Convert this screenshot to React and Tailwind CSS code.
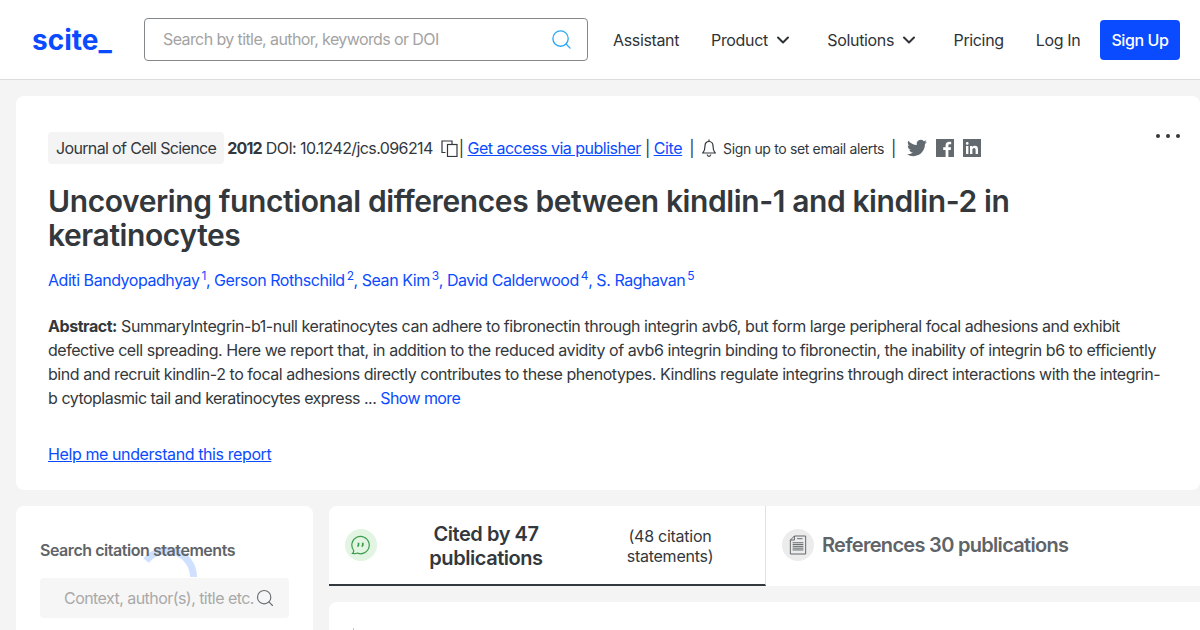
import { ChevronDown, Search } from 'lucide-react'

function TwitterIcon() {
  return (
    <svg viewBox="0 0 24 24" className="w-[20px] h-[20px]" fill="#636a6f">
      <path d="M23.95 4.57a10 10 0 0 1-2.82.77 4.96 4.96 0 0 0 2.16-2.72c-.95.55-2 .95-3.12 1.18a4.92 4.92 0 0 0-8.38 4.48C7.69 8.1 4.07 6.13 1.64 3.16a4.82 4.82 0 0 0-.66 2.47c0 1.71.87 3.21 2.19 4.1a4.9 4.9 0 0 1-2.23-.62v.06a4.92 4.92 0 0 0 3.95 4.83 5 5 0 0 1-2.21.08 4.94 4.94 0 0 0 4.6 3.42A9.87 9.87 0 0 1 0 19.54a14 14 0 0 0 7.56 2.21c9.05 0 14-7.5 14-13.98 0-.21 0-.42-.02-.63a9.94 9.94 0 0 0 2.46-2.55z" />
    </svg>
  )
}

function FacebookIcon() {
  return (
    <svg viewBox="0 0 18 18" className="w-[18px] h-[18px]">
      <rect width="18" height="18" fill="#636a6f" />
      <path fill="#fff" d="M12.4 18v-7h2.3l.4-2.7h-2.7V6.6c0-.8.2-1.3 1.3-1.3h1.5V2.9c-.3 0-1.1-.1-2.1-.1-2.1 0-3.5 1.3-3.5 3.6v1.9H7.2V11h2.4v7z" />
    </svg>
  )
}

function LinkedinIcon() {
  return (
    <svg viewBox="0 0 18 18" className="w-[18px] h-[18px]">
      <rect width="18" height="18" fill="#636a6f" />
      <path fill="#fff" d="M3 7h2.4v8H3zM4.2 3a1.4 1.4 0 1 1 0 2.8 1.4 1.4 0 0 1 0-2.8zM7 7h2.3v1.1c.4-.7 1.3-1.3 2.6-1.3 2.4 0 3.1 1.5 3.1 3.9V15h-2.4v-3.8c0-1.1-.2-2.2-1.5-2.2s-1.700 1-1.700 2.200V15H7z" />
    </svg>
  )
}

function CopyIcon() {
  return (
    <svg viewBox="0 0 17 17" className="w-[17px] h-[17px] shrink-0" fill="none" stroke="#33383c" strokeWidth="1.2">
      <path d="M4.500 12.500H1V1h10v3.500" />
      <rect x="6.500" y="4.500" width="9.500" height="12" />
    </svg>
  )
}

function BellIcon() {
  return (
    <svg viewBox="0 0 14 18" className="w-[14px] h-[18px] shrink-0" fill="none" stroke="#33383c" strokeWidth="1.2">
      <path d="M7 2.500c-2.800 0-4 2-4 4.500 0 3.500-.8 5.500-2.200 7h12.400C11.800 12.500 11 10.500 11 7c0-2.500-1.200-4.500-4-4.500z" />
      <path d="M7 .600v1.900M5.200 15.500c.2 1.100.9 1.800 1.800 1.800s1.600-.7 1.800-1.800" />
    </svg>
  )
}

function QuoteBubble() {
  return (
    <svg viewBox="0 0 20 20" className="w-[20px] h-[20px]" fill="none" stroke="#3c9c4c" strokeWidth="1.2">
      <path d="M1.500 18.500c.9-.8 1.300-1.700 1.200-3A8.700 8.700 0 1 1 10 18.800c-1.300 0-2.400-.3-3.400-.8-1.500.7-3.200.8-5.100.5z" />
      <path d="M7.500 7.800v2.300l-.9 1.600M11.800 7.800v2.300l-.9 1.600" strokeWidth="1.700" />
    </svg>
  )
}

function DocIcon() {
  return (
    <svg viewBox="0 0 20 22" className="w-[18px] h-[20px]" fill="none" stroke="#555b60" strokeWidth="1">
      <path d="M6 1h12.500v20h-17V5.500z" />
      <path d="M6 1v4.500H1.500" />
      <path d="M9 4h6M4 8.500h12M4 10.500h12M4 12.500h12M4 14.500h12M4 16.500h12" />
    </svg>
  )
}

function NavItem({ label, chevron }) {
  return (
    <span className="flex items-center gap-[5px] shrink-0 whitespace-nowrap text-[16px] text-[#2f3337]">
      {label}
      {chevron && <ChevronDown className="w-[20px] h-[20px] mr-[2.5px]" strokeWidth={2.4} />}
    </span>
  )
}

export default function App() {
  return (
    <div className="h-[630px] w-[1200px] overflow-hidden bg-[#f4f4f4] font-['Inter','Liberation_Sans',sans-serif] text-[#33383c]">
      {/* Header */}
      <header className="h-[80px] bg-white border-b border-[#dcdcdc] flex items-center pl-[32px] pr-[20px]">
        <div className="w-[112px] shrink-0 text-[28px] leading-none font-bold text-[#0a4bff]">scite_</div>
        <div className="w-[444px] shrink-0 h-[43px] border border-[#85888a] rounded-[4px] flex items-center justify-between pl-[18px] pr-[14px]">
          <span className="pb-[2px] text-[16px] text-[#a3a3a3] tracking-[-0.6px]">Search by title, author, keywords or DOI</span>
          <Search className="w-[23px] h-[23px] text-[#2aa8f5]" strokeWidth={1.4} />
        </div>
        <nav className="ml-[25px] flex items-center gap-[32px] tracking-[-0.35px]">
          <NavItem label="Assistant" />
          <NavItem label="Product" chevron />
          <NavItem label="Solutions" chevron />
          <NavItem label="Pricing" />
          <NavItem label="Log In" />
        </nav>
        <button className="ml-auto shrink-0 w-[80px] h-[40px] rounded-[4px] bg-[#0a4bff] text-white text-[16px] font-medium tracking-[-0.4px]">Sign Up</button>
      </header>

      <main className="pl-[16px] pt-[16px]">
        {/* Paper card */}
        <section className="relative h-[394px] bg-white rounded-[8px] pl-[32px] pr-[32px] pt-[36px]">
          <div className="flex items-center h-[32px] text-[16px] tracking-[-0.55px] whitespace-nowrap">
            <span className="h-[32px] px-[8px] flex items-center bg-[#f4f4f4] rounded-[4px] tracking-[-0.65px]">Journal of Cell Science</span>
            <span className="ml-[3px] font-bold tracking-[-0.8px]">2012</span>
            <span className="ml-[4px] tracking-[-0.6px]">DOI: 10.1242/jcs.096214</span>
            <span className="ml-[8px]"><CopyIcon /></span>
            <span className="ml-[1px]">|</span>
            <a className="ml-[4px] text-[#0a4bff] underline tracking-[-0.5px]">Get access via publisher</a>
            <span className="ml-[4px]">|</span>
            <a className="ml-[4px] text-[#0a4bff] underline tracking-[-0.35px]">Cite</a>
            <span className="ml-[7px]">|</span>
            <span className="ml-[8px]"><BellIcon /></span>
            <span className="ml-[7px] text-[14px] tracking-[-0.35px]">Sign up to set email alerts</span>
            <span className="ml-[7px]">|</span>
            <span className="ml-[11px] flex items-center gap-[9px]">
              <TwitterIcon />
              <FacebookIcon />
              <LinkedinIcon />
            </span>
          </div>
          <h1 className="mt-[20px] text-[30px] leading-[34px] font-semibold tracking-[-0.4px]">
            Uncovering functional differences between kindlin-1 and kindlin-2 in keratinocytes
          </h1>
          <div className="mt-[16px] text-[16px] leading-[24px] text-[#0a4bff] tracking-[-0.45px]">
            Aditi Bandyopadhyay<sup className="ml-[2px]">1</sup>, Gerson Rothschild<sup className="ml-[2px]">2</sup>, Sean Kim<sup className="ml-[2px]">3</sup>, David Calderwood<sup className="ml-[2px]">4</sup>, S. Raghavan<sup className="ml-[2px]">5</sup>
          </div>
          <p className="mt-[22px] text-[16px] leading-[24px] tracking-[-0.45px]">
            <b className="font-bold">Abstract:</b> SummaryIntegrin-b1-null keratinocytes can adhere to fibronectin through integrin avb6, but form large peripheral focal adhesions and exhibit defective cell spreading. Here we report that, in addition to the reduced avidity of avb6 integrin binding to fibronectin, the inability of integrin b6 to efficiently bind and recruit kindlin-2 to focal adhesions directly contributes to these phenotypes. Kindlins regulate integrins through direct interactions with the integrin-b <span className="tracking-[-0.52px]">cytoplasmic tail and keratinocytes express ...</span> <a className="text-[#0a4bff] tracking-[-0.6px]">Show more</a>
          </p>
          <a className="block mt-[32px] text-[16px] leading-[24px] text-[#0a4bff] underline tracking-[-0.4px]">Help me understand this report</a>
          <div className="absolute right-[20px] top-[38px] flex gap-[6px]">
            <span className="w-[4px] h-[4px] rounded-full bg-[#33383c]" />
            <span className="w-[4px] h-[4px] rounded-full bg-[#33383c]" />
            <span className="w-[4px] h-[4px] rounded-full bg-[#33383c]" />
          </div>
        </section>

        <div className="mt-[16px] flex gap-[16px]">
          {/* Search sidebar */}
          <aside className="relative w-[297px] h-[200px] bg-white rounded-t-[8px] pt-[34px] px-[24px]">
            <div className="relative z-10 text-[16px] leading-[20px] font-semibold text-[#5f6468] tracking-[-0.45px]">Search citation statements</div>
            {/* loading spinner behind the input */}
            <svg viewBox="0 0 60 60" className="absolute left-[121px] top-[41px] w-[60px] h-[60px]" fill="none" stroke="#cfe1ff" strokeWidth="7">
              <path d="M9.100 13.700A26.500 26.500 0 0 1 56.500 30" />
            </svg>
            <div className="relative mt-[18px] h-[40px] w-[249px] bg-[#f6f6f6] rounded-[4px] flex items-center pl-[24px] gap-[1px]">
              <span className="text-[16px] text-[#a9a9a9] whitespace-nowrap tracking-[-0.55px]">Context, author(s), title etc.</span>
              <Search className="w-[20px] h-[20px] text-[#6b6f72]" strokeWidth={1.4} />
            </div>
          </aside>

          <div className="flex-1">
            {/* Tabs */}
            <div className="flex h-[80px] bg-white rounded-tl-[8px]">
              <div className="w-[437px] flex items-center border-r border-[#e2e2e2] border-b-2 border-b-[#33383c] pl-[16px] pt-[2px]">
                <span className="w-[32px] h-[32px] rounded-full bg-[#e2f4e2] flex items-center justify-center shrink-0 -mt-[2px]">
                  <QuoteBubble />
                </span>
                <span className="w-[154px] ml-[32px] text-center text-[20px] leading-[24px] font-semibold tracking-[-0.45px]">Cited by 47 publications</span>
                <span className="w-[120px] ml-[47px] text-center text-[16px] leading-[20px] tracking-[-0.25px]">(48 citation statements)</span>
              </div>
              <div className="flex-1 flex items-start pl-[16px] pt-[23px]">
                <span className="w-[32px] h-[32px] rounded-full bg-[#ececec] flex items-center justify-center shrink-0">
                  <DocIcon />
                </span>
                <span className="ml-[8px] leading-[32px] text-[20px] font-semibold text-[#5f6468] tracking-[-0.7px]">References 30 publications</span>
              </div>
            </div>
            {/* Next card starts below the tabs */}
            <div className="mt-[16px] h-[100px] bg-white rounded-tl-[8px] pl-[24px] pt-[26px]">
              <div className="w-[1px] h-[3px] bg-[#c4c4c4]" />
            </div>
          </div>
        </div>
      </main>
    </div>
  )
}
